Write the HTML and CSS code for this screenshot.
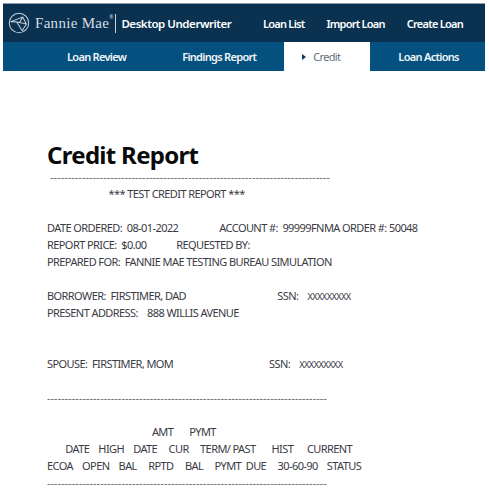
FILE: index.html
```html
<!DOCTYPE html>
<html lang="en">
<head>
<meta charset="utf-8">
<title>Credit Report</title>
<link rel="stylesheet" href="styles.css">
</head>
<body>
<div class="page">
  <header class="topbar">
    <div class="brand">
      <svg class="logo" viewBox="0 0 24 24" aria-hidden="true">
        <circle cx="12" cy="12" r="10.6"/>
        <path d="M3 10.5 L16 5.5 L20 13 L9.5 11 L15.5 20.5 M9.5 11 L3 10.5 M16 5.5 L12.5 11.6 M20 13 L15.5 20.5"/>
      </svg>
      <span class="brand-name">Fannie Mae</span><sup class="reg">®</sup>
      <span class="brand-sep"></span>
      <span class="brand-app">Desktop Underwriter</span>
    </div>
    <nav class="topnav">
      <a>Loan List</a>
      <a>Import Loan</a>
      <a>Create Loan</a>
    </nav>
  </header>
  <nav class="tabs">
    <a class="tab tab-review">Loan Review</a>
    <a class="tab tab-findings">Findings Report</a>
    <a class="tab tab-credit"><span class="caret"></span>Credit</a>
    <a class="tab tab-actions">Loan Actions</a>
  </nav>
  <main class="content">
    <h1>Credit Report</h1>
    <pre class="report"><span class="rule indent">-------------------------------------------------------------------------------</span>
                           *** TEST CREDIT REPORT ***

DATE ORDERED:  08-01-2022                  ACCOUNT #:  99999FNMA ORDER #: 50048
REPORT PRICE:  $0.00             REQUESTED BY:
PREPARED FOR:  FANNIE MAE TESTING BUREAU SIMULATION

BORROWER:  FIRSTIMER, DAD                                        SSN:    <span class="small">XXXXXXXXX</span>
PRESENT ADDRESS:    888 WILLIS AVENUE


SPOUSE:  FIRSTIMER, MOM                                          SSN:    <span class="small">XXXXXXXXX</span>

<span class="rule">-------------------------------------------------------------------------------</span>

                                              AMT       PYMT
        DATE    HIGH    DATE     CUR     TERM/ PAST       HIST      CURRENT
ECOA    OPEN    BAL     RPTD     BAL     PYMT  DUE     30-60-90    STATUS
<span class="rule">-------------------------------------------------------------------------------</span></pre>
  </main>
</div>
</body>
</html>
```
FILE: styles.css
```css
html, body {
  margin: 0;
  padding: 0;
  background: #fff;
}
body {
  width: 489px;
  height: 490px;
  overflow: hidden;
  font-family: "Noto Sans", "Open Sans", sans-serif;
}
.page {
  padding: 3px 4px 0 3px;
}
.topbar {
  height: 39px;
  background: #0a3250;
  border-top: 1px solid #8a9aa8;
  box-sizing: border-box;
  display: flex;
  align-items: center;
  justify-content: space-between;
  color: #fff;
  padding-left: 5px;
  white-space: nowrap;
}
.brand {
  display: flex;
  align-items: center;
}
.logo {
  width: 22px;
  height: 22px;
  fill: none;
  stroke: #c9d3da;
  stroke-width: 1.1;
  margin-right: 5px;
}
.brand-name {
  font-family: "Liberation Serif", serif;
  font-size: 15px;
  color: #d5dde3;
  letter-spacing: 0.3px;
}
.reg {
  font-size: 5px;
  color: #d5dde3;
  align-self: flex-start;
  margin-top: 2px;
}
.brand-sep {
  width: 1px;
  height: 19px;
  background: #c9d3da;
  margin: 0 5px 0 2px;
}
.brand-app {
  font-size: 11.5px;
  font-weight: 600;
  letter-spacing: -0.45px;
}
.topnav {
  display: flex;
  gap: 22px;
  padding-right: 22px;
  font-size: 11px;
  font-weight: 600;
  letter-spacing: -0.75px;
}
.tabs {
  height: 29px;
  background: #04517f;
  display: flex;
  color: #f2f5f7;
  font-size: 11px;
  font-weight: 600;
  letter-spacing: -0.7px;
  line-height: 29px;
  white-space: nowrap;
}
.tab-review { margin-left: 64px; }
.tab-findings { margin-left: 56px; }
.tab-credit {
  margin-left: 28px;
  width: 86px;
  box-sizing: border-box;
  padding-left: 18px;
  background: #fff;
  color: #5f6f7c;
  font-weight: 400;
  display: flex;
  align-items: center;
}
.caret {
  width: 0;
  height: 0;
  border-left: 4px solid #123a58;
  border-top: 3px solid transparent;
  border-bottom: 3px solid transparent;
  margin-right: 7px;
}
.tab-actions { margin-left: 28px; }
.content {
  padding: 70px 0 0 44px;
}
h1 {
  margin: 0;
  font-size: 24px;
  line-height: 27px;
  font-weight: 700;
  letter-spacing: -0.7px;
  color: #0a0a0a;
}
.report {
  margin: 0;
  font-family: "Noto Sans", "Open Sans", sans-serif;
  font-size: 11px;
  letter-spacing: -0.58px;
  line-height: 17px;
  color: #3a3a44;
}
.rule {
  letter-spacing: 0;
  color: #6a6a72;
}
.indent {
  margin-left: 3px;
}
.small {
  font-size: 9.2px;
  line-height: 1;
}
```
